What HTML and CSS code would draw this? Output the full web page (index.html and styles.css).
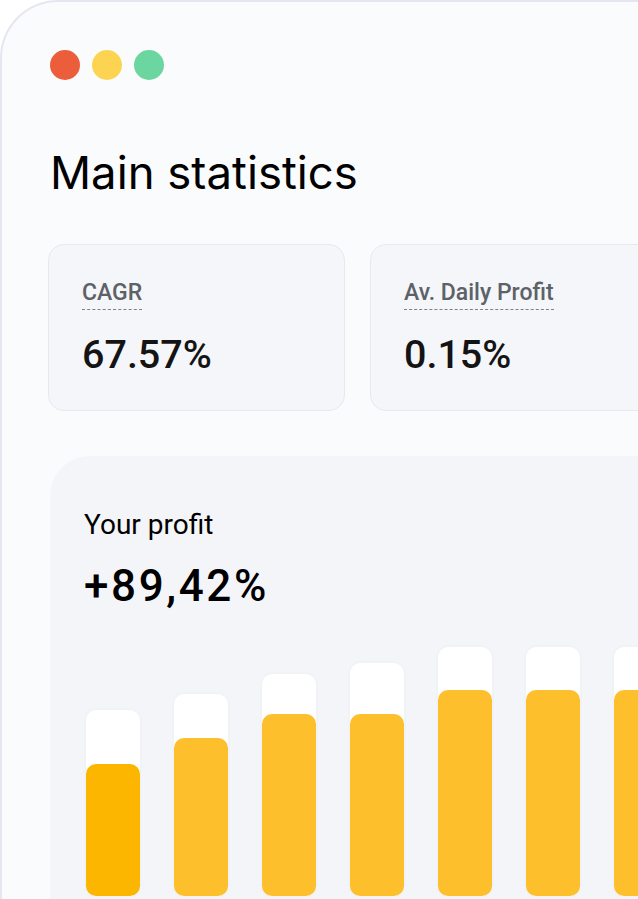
FILE: index.html
```html
<!DOCTYPE html>
<html lang="en">
<head>
<meta charset="utf-8">
<title>Main statistics</title>
<link rel="stylesheet" href="styles.css">
</head>
<body>
<div class="window">
  <div class="dots">
    <span class="dot dot-red"></span>
    <span class="dot dot-yellow"></span>
    <span class="dot dot-green"></span>
  </div>
  <h1 class="title">Main statistics</h1>
  <div class="stats">
    <div class="stat-card">
      <div class="stat-label"><span class="dotted">CAGR</span></div>
      <div class="stat-value">67.57%</div>
    </div>
    <div class="stat-card">
      <div class="stat-label"><span class="dotted">Av. Daily Profit</span></div>
      <div class="stat-value">0.15%</div>
    </div>
  </div>
  <div class="profit-card">
    <div class="profit-label">Your profit</div>
    <div class="profit-value">+89,42%</div>
    <div class="chart">
      <div class="track" style="height:186px"><div class="fill fill-first" style="height:132px"></div></div>
      <div class="track" style="height:202px"><div class="fill" style="height:158px"></div></div>
      <div class="track" style="height:222px"><div class="fill" style="height:182px"></div></div>
      <div class="track" style="height:233px"><div class="fill" style="height:182px"></div></div>
      <div class="track" style="height:249px"><div class="fill" style="height:206px"></div></div>
      <div class="track" style="height:249px"><div class="fill" style="height:206px"></div></div>
      <div class="track" style="height:249px"><div class="fill" style="height:206px"></div></div>
    </div>
  </div>
</div>
</body>
</html>
```

FILE: styles.css
```css
html, body {
  margin: 0;
  padding: 0;
  background: #ffffff;
  overflow: hidden;
  width: 638px;
  height: 899px;
}

.window {
  box-sizing: border-box;
  width: 760px;
  height: 1000px;
  border: 2px solid #e6e6f1;
  border-right: none;
  border-bottom: none;
  border-top-left-radius: 58px;
  background: #fafbfd;
  padding: 48px 0 0 48px;
}

.dots {
  display: flex;
  gap: 12px;
}

.dot {
  width: 30px;
  height: 30px;
  border-radius: 50%;
  display: block;
}

.dot-red { background: #ec5d3b; }
.dot-yellow { background: #fdd452; }
.dot-green { background: #6bd69f; }

.title {
  margin: 66px 0 0 0;
  font-family: Inter, "Liberation Sans", sans-serif;
  font-weight: 400;
  font-size: 45.5px;
  line-height: 54px;
  color: #000000;
}

.stats {
  display: flex;
  gap: 25px;
  margin: 44px 0 0 -2px;
}

.stat-card {
  box-sizing: border-box;
  flex: 0 0 auto;
  width: 297px;
  height: 167px;
  border: 1px solid #e8e9ef;
  border-radius: 16px;
  background: #f5f6f9;
  padding: 35px 0 0 33px;
  font-family: Roboto, "Liberation Sans", sans-serif;
}

.stat-label {
  font-size: 23px;
  font-weight: 500;
  line-height: 26px;
  color: #5d6168;
}

.dotted {
  display: inline-block;
  padding-bottom: 3px;
  border-bottom: 1px dashed #7d8088;
}

.stat-value {
  margin-top: 23px;
  font-size: 39.5px;
  font-weight: 500;
  line-height: 44px;
  color: #141414;
}

.profit-card {
  box-sizing: border-box;
  width: 700px;
  height: 520px;
  margin: 45px 0 0 0;
  border-radius: 40px;
  background: #f4f5f8;
  padding: 53px 0 0 34px;
  font-family: Roboto, "Liberation Sans", sans-serif;
}

.profit-label {
  font-size: 28px;
  line-height: 32px;
  font-weight: 400;
  color: #000000;
}

.profit-value {
  margin-top: 20px;
  font-size: 44px;
  line-height: 50px;
  font-weight: 500;
  color: #000000;
  letter-spacing: 2.6px;
}

.chart {
  display: flex;
  align-items: flex-end;
  gap: 34px;
  height: 249px;
  margin: 36px 0 0 2px;
}

.track {
  position: relative;
  flex: 0 0 54px;
  width: 54px;
  border-radius: 10px;
  background: #ffffff;
  box-shadow: 0 0 3px rgba(220, 222, 235, 0.35);
  display: flex;
  align-items: flex-end;
}

.fill {
  width: 100%;
  border-radius: 10px;
  background: #fdbf2b;
}

.fill-first {
  background: #fdb600;
}
```
